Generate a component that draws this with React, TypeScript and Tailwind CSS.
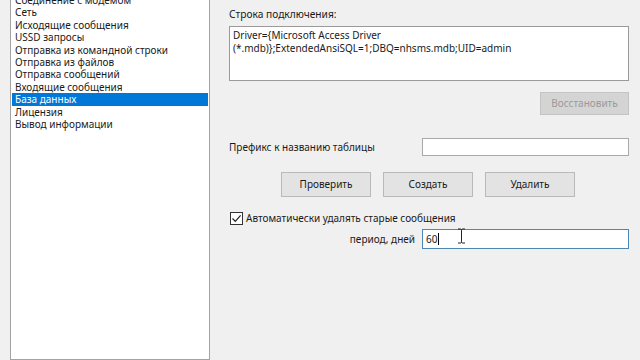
import { type ReactNode } from 'react'

const sections = [
  'Соединение с модемом',
  'Сеть',
  'Исходящие сообщения',
  'USSD запросы',
  'Отправка из командной строки',
  'Отправка из файлов',
  'Отправка сообщений',
  'Входящие сообщения',
  'База данных',
  'Лицензия',
  'Вывод информации',
]

const font = { fontFamily: '"Noto Sans", "Open Sans", sans-serif' }

function WinButton({ children, disabled }: { children: ReactNode; disabled?: boolean }): ReactNode {
  return (
    <button
      type="button"
      disabled={disabled}
      className={
        disabled
          ? 'h-[23px] w-[89px] border border-[#c4c4c4] bg-[#d4d4d4] text-[10px] text-[#9a9a9a]'
          : 'h-[25px] w-[90px] border border-[#b9b9b9] bg-[#e3e3e3] text-[10px] text-[#1a1a1a]'
      }
    >
      {children}
    </button>
  )
}

export default function App(): ReactNode {
  return (
    <div className="flex h-[360px] w-[640px] overflow-hidden bg-[#f0f0f0] text-[#1a1a1a]" style={font}>
      {/* список разделов */}
      <div className="w-[210px] shrink-0 pl-[10px]">
        <div className="-mt-[8px] h-[368px] w-[200px] border border-[#a3a3a3] bg-white pt-[1px] pl-[1px] pr-[1px]">
          {sections.map((s) => (
            <div
              key={s}
              className={
                'h-[12.4px] pl-[3px] text-[10px] leading-[12.4px] whitespace-nowrap ' +
                (s === 'База данных' ? 'bg-[#0078d7] text-white' : '')
              }
            >
              {s}
            </div>
          ))}
        </div>
      </div>

      {/* настройки базы данных */}
      <div className="flex flex-1 flex-col pl-[19px] pr-[11px]">
        <div className="mt-[7px] h-[14px] text-[10.2px] leading-[14px]">Строка подключения:</div>
        <div className="mt-[5px] h-[55px] w-[400px] border border-[#9a9a9a] bg-white px-[3px] py-[2px] text-[10px] leading-[13px]">
          Driver={'{'}Microsoft Access Driver
          <br />
          (*.mdb){'}'};ExtendedAnsiSQL=1;DBQ=nhsms.mdb;UID=admin
        </div>
        <div className="mt-[11px] flex justify-end">
          <WinButton disabled>Восстановить</WinButton>
        </div>

        <div className="mt-[23px] flex h-[18px] items-center justify-between">
          <span className="text-[10px]">Префикс к названию таблицы</span>
          <div className="h-[18px] w-[207px] border border-[#a9a9a9] bg-white" />
        </div>

        <div className="mt-[16px] flex gap-[12px] pl-[52px]">
          <WinButton>Проверить</WinButton>
          <WinButton>Создать</WinButton>
          <WinButton>Удалить</WinButton>
        </div>

        <div className="mt-[14px] flex items-center gap-[3px] pl-[1px]">
          <span className="flex h-[13px] w-[13px] items-center justify-center border border-[#333] bg-white">
            <svg width="11" height="11" viewBox="0 0 11 11">
              <path d="M1.5 5.5 L4.3 8.3 L9.6 2.3" fill="none" stroke="#222" strokeWidth="1.2" />
            </svg>
          </span>
          <span className="text-[10px]">Автоматически удалять старые сообщения</span>
        </div>

        <div className="mt-[3px] flex items-center justify-end gap-[7px]">
          <span className="text-[10px]">период, дней</span>
          <div className="relative flex h-[20px] w-[207px] items-center border border-[#4d88b5] bg-white pl-[3px] text-[10px]">
            <span>60</span>
            <span className="ml-[1px] h-[12px] w-[1px] bg-black" />
            <svg className="absolute left-[34px] top-[-2px]" width="9" height="16" viewBox="0 0 9 16">
              <path
                d="M1 1 H3.5 Q4.5 1 4.5 2.5 V13.5 Q4.5 15 3.5 15 H1 M8 1 H5.5 Q4.5 1 4.5 2.5 M4.5 13.5 Q4.5 15 5.5 15 H8"
                fill="none"
                stroke="#222"
                strokeWidth="1"
              />
            </svg>
          </div>
        </div>
      </div>
    </div>
  )
}
